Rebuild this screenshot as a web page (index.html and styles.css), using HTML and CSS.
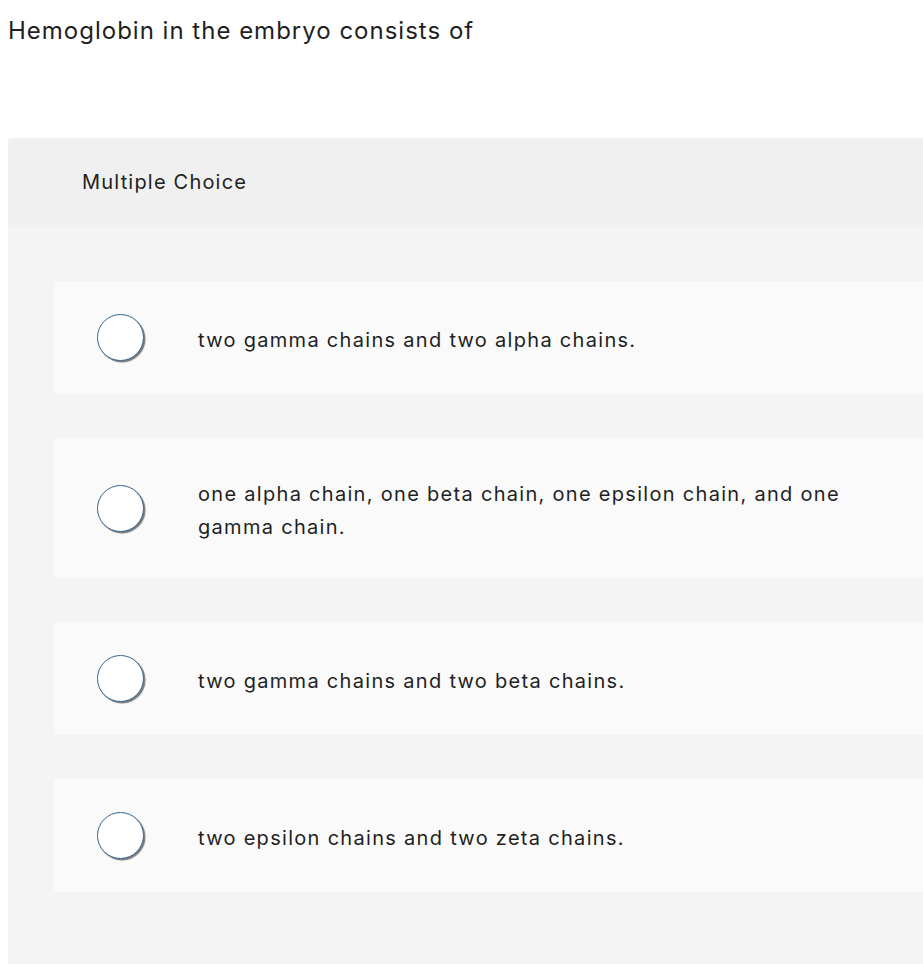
FILE: index.html
```html
<!DOCTYPE html>
<html>
<head>
<meta charset="utf-8">
<link rel="stylesheet" href="styles.css">
</head>
<body>
<p class="question">Hemoglobin in the embryo consists of</p>
<div class="panel">
  <div class="panel-header">Multiple Choice</div>
  <div class="panel-body">
    <label class="option"><span class="radio"></span><span class="option-text">two gamma chains and two alpha chains.</span></label>
    <label class="option"><span class="radio"></span><span class="option-text">one alpha chain, one beta chain, one epsilon chain, and one gamma chain.</span></label>
    <label class="option"><span class="radio"></span><span class="option-text">two gamma chains and two beta chains.</span></label>
    <label class="option"><span class="radio"></span><span class="option-text">two epsilon chains and two zeta chains.</span></label>
  </div>
</div>
</body>
</html>
```
FILE: styles.css
```css
html {
  overflow: hidden;
}
body {
  margin: 8px 0 0 8px;
  background: #ffffff;
  font-family: "Inter", "Open Sans", sans-serif;
  color: #1f1f1f;
}
.question {
  margin: 0;
  padding-top: 8px;
  font-size: 24px;
  line-height: 30px;
  letter-spacing: 1px;
}
.panel {
  margin-top: 92px;
  border-radius: 4px 0 0 0;
  overflow: hidden;
  background: #f4f4f4;
  height: 826px;
}
.panel-header {
  background: #f0f0f0;
  height: 87px;
  display: flex;
  align-items: center;
  padding-left: 74px;
  font-size: 20px;
  letter-spacing: 1.2px;
  color: #222;
}
.panel-body {
  padding: 56px 0 40px 46px;
  display: flex;
  flex-direction: column;
  gap: 44px;
}
.option {
  display: flex;
  align-items: center;
  background: #fafafa;
  border-radius: 4px 0 0 4px;
  padding: 33px 0 33px 43px;
}
.radio {
  flex: none;
  box-sizing: border-box;
  width: 47px;
  height: 47px;
  border: 1.5px solid #3a6592;
  border-radius: 50%;
  background: #fff;
  box-shadow: 1.5px 1.5px 1px #7a7a7a;
  margin-right: 54px;
}
.option-text {
  font-size: 20px;
  line-height: 33px;
  letter-spacing: 1.3px;
  padding: 7px 0 1px;
  width: 680px;
  color: #1f1f1f;
}
```
